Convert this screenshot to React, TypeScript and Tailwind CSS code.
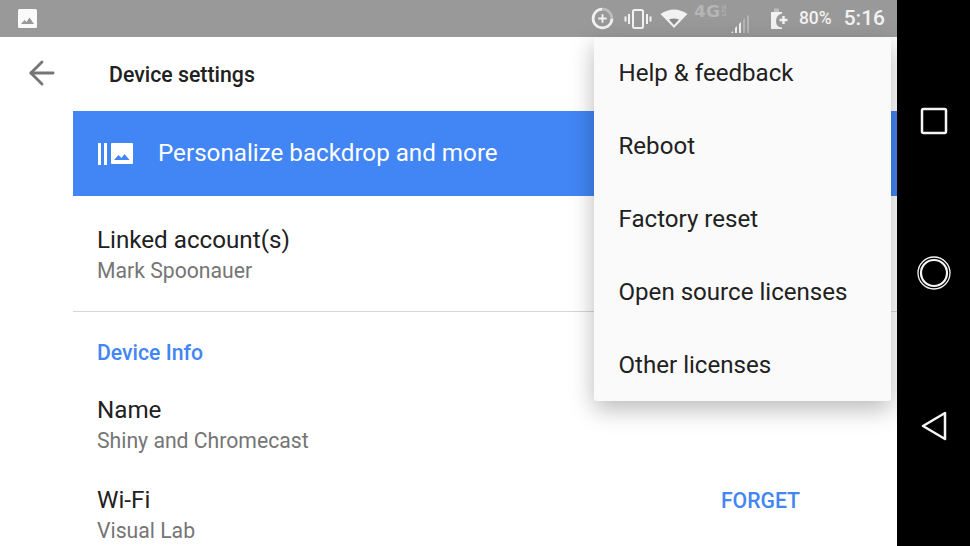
import { ArrowLeft } from 'lucide-react';

const menuItems = ['Help & feedback', 'Reboot', 'Factory reset', 'Open source licenses', 'Other licenses'];

function StatusBar() {
  return (
    <div className="h-[37px] shrink-0 bg-[#999999] flex items-center pl-[18px] pr-[12px] text-[#f2f2f2]">
      {/* image notification */}
      <svg width="19" height="19" viewBox="0 0 19 19">
        <rect width="19" height="19" rx="1.5" fill="#fafafa" />
        <path d="M3 15l3.5-4 2 2 3-4.5 4.5 6.5z" fill="#999999" />
      </svg>
      <div className="ml-auto flex items-center">
        {/* data saver */}
        <svg width="23" height="23" viewBox="0 0 22 22" fill="none" stroke="#f2f2f2" strokeWidth="2.6">
          <path d="M11 2a9 9 0 1 0 9 9" />
          <path d="M11 2a9 9 0 0 1 9 9" stroke="#bdbdbd" />
          <path d="M11 7v8M7 11h8" strokeWidth="1.8" />
        </svg>
        {/* vibrate */}
        <svg className="ml-[10px]" width="28" height="22" viewBox="0 0 28 22" fill="none" stroke="#f2f2f2" strokeWidth="2">
          <rect x="9" y="2" width="10" height="18" rx="1.5" />
          <path d="M5 6v10M23 6v10M1.500 8.500v5M26.500 8.500v5" />
        </svg>
        {/* wifi */}
        <svg className="ml-[8px]" width="28" height="21" viewBox="0 0 28 21">
          <path d="M14 20L0.500 6Q14 -3 27.500 6z" fill="#f2f2f2" />
          <path d="M14 17l-5-5.500Q14 9.500 19 11.500z" fill="#8a8a8a" />
        </svg>
        {/* 4G LTE + signal */}
        <div className="relative ml-[6px] w-[56px] h-[30px]">
          <span className="absolute left-0 top-[-2px] origin-left scale-x-[1.15] font-['DejaVu_Sans',sans-serif] font-bold text-[15px] leading-[20px] text-[#b5b5b5]">4G</span>
          <span className="absolute left-[25px] top-[3px] -rotate-90 font-['Liberation_Sans',sans-serif] font-bold text-[6px] leading-[7px] text-[#b5b5b5]">LTE</span>
          <svg className="absolute left-[36px] top-[11px]" width="20" height="19" viewBox="0 0 20 19">
            <path d="M1 18l2-2v2zM5 18v-5l2-2v7zM9 18V9l2-2v11z" fill="#f2f2f2" />
            <path d="M13 18V5l2-2v15zM17 18V1l2-1v18z" fill="#b5b5b5" />
          </svg>
        </div>
        {/* battery charging */}
        <svg className="ml-[20px]" width="20" height="21" viewBox="0 0 20 21">
          <path d="M4 2h5v2h3v1.500Q6 7 6 13t6 6.500V21H1V4h3z" fill="#f2f2f2" />
          <path d="M4 0.500h5V4H4z" fill="#bdbdbd" />
          <path d="M13.500 8v8M9.500 12h8" stroke="#f2f2f2" strokeWidth="2.400" />
        </svg>
        <span className="ml-[9px] font-['Roboto',sans-serif] font-medium text-[17.5px] leading-none">80%</span>
        <span className="ml-[12px] font-['Roboto',sans-serif] font-medium text-[21px] leading-none">5:16</span>
      </div>
    </div>
  );
}

function Row({ title, sub, action }: { title: string; sub: string; action?: string }) {
  return (
    <div className="flex pl-[97px] pr-[97px]">
      <div>
        <div className="h-[30px] text-[24.2px] leading-[28px] text-[#212121]">{title}</div>
        <div className="text-[21.2px] leading-[30px] text-[#757575]">{sub}</div>
      </div>
      {action && (
        <div className="ml-auto text-[21.2px] leading-[30px] font-medium text-[#4285f4]">{action}</div>
      )}
    </div>
  );
}

function NavBar() {
  return (
    <div className="w-[73px] shrink-0 bg-black flex flex-col items-center pt-[107px] pb-[105px] justify-between">
      <svg width="28" height="28" viewBox="0 0 28 28" fill="none" stroke="#f5f5f5" strokeWidth="2.500">
        <rect x="2" y="2" width="24" height="24" rx="1.500" />
      </svg>
      <svg width="34" height="34" viewBox="0 0 34 34" fill="none" stroke="#f5f5f5">
        <circle cx="17" cy="17" r="16" strokeWidth="1.300" />
        <circle cx="17" cy="17" r="13" strokeWidth="2.200" />
      </svg>
      <svg width="26" height="30" viewBox="0 0 26 30" fill="none" stroke="#f5f5f5" strokeWidth="2.500" strokeLinejoin="round">
        <path d="M24 2v26L2 15z" />
      </svg>
    </div>
  );
}

export default function App() {
  return (
    <div className="relative w-[970px] h-[546px] overflow-hidden flex bg-white font-['Roboto',sans-serif]">
      <div className="w-[897px] shrink-0 flex flex-col">
        <StatusBar />

        {/* toolbar */}
        <div className="h-[74px] shrink-0 flex items-center pl-[23px]">
          <ArrowLeft className="w-[38px] h-[38px] text-[#757575] relative top-[-1px]" strokeWidth={1.8} />
          <span className="ml-[48px] text-[21.3px] font-medium text-[#212121] relative top-[1px]">Device settings</span>
        </div>

        {/* banner */}
        <div className="ml-[73px] h-[85px] shrink-0 bg-[#4285f4] flex items-center pl-[25px] text-white">
          <svg width="35" height="22" viewBox="0 0 35 22" fill="white">
            <rect x="0" y="0" width="3" height="22" />
            <rect x="6" y="0" width="3" height="22" />
            <rect x="13" y="0" width="22" height="21" rx="1" />
            <path d="M16 17l4.500-5 3 3 3-4 5 6z" fill="#4285f4" />
          </svg>
          <span className="ml-[25px] text-[24.2px]">Personalize backdrop and more</span>
        </div>

        <div className="h-[30px] shrink-0" />
        <Row title="Linked account(s)" sub="Mark Spoonauer" />
        <div className="ml-[73px] mt-[25px] h-px shrink-0 bg-[#d6d6d6]" />
        <div className="pl-[97px] mt-[26px] text-[21.2px] leading-[30px] font-medium text-[#4285f4]">Device Info</div>
        <div className="h-[28px] shrink-0" />
        <Row title="Name" sub="Shiny and Chromecast" />
        <div className="h-[30px] shrink-0" />
        <Row title="Wi-Fi" sub="Visual Lab" action="FORGET" />
      </div>

      <NavBar />

      {/* overflow menu */}
      <div className="absolute left-[594px] top-[37px] w-[297px] h-[364px] bg-[#fafafa] rounded-b-[3px] shadow-[0_8px_24px_rgba(0,0,0,0.28)] flex flex-col">
        {menuItems.map((item) => (
          <div key={item} className="h-[73px] shrink-0 flex items-center pl-[24.500px] text-[24.100px] text-[#212121]">
            {item}
          </div>
        ))}
      </div>
    </div>
  );
}
